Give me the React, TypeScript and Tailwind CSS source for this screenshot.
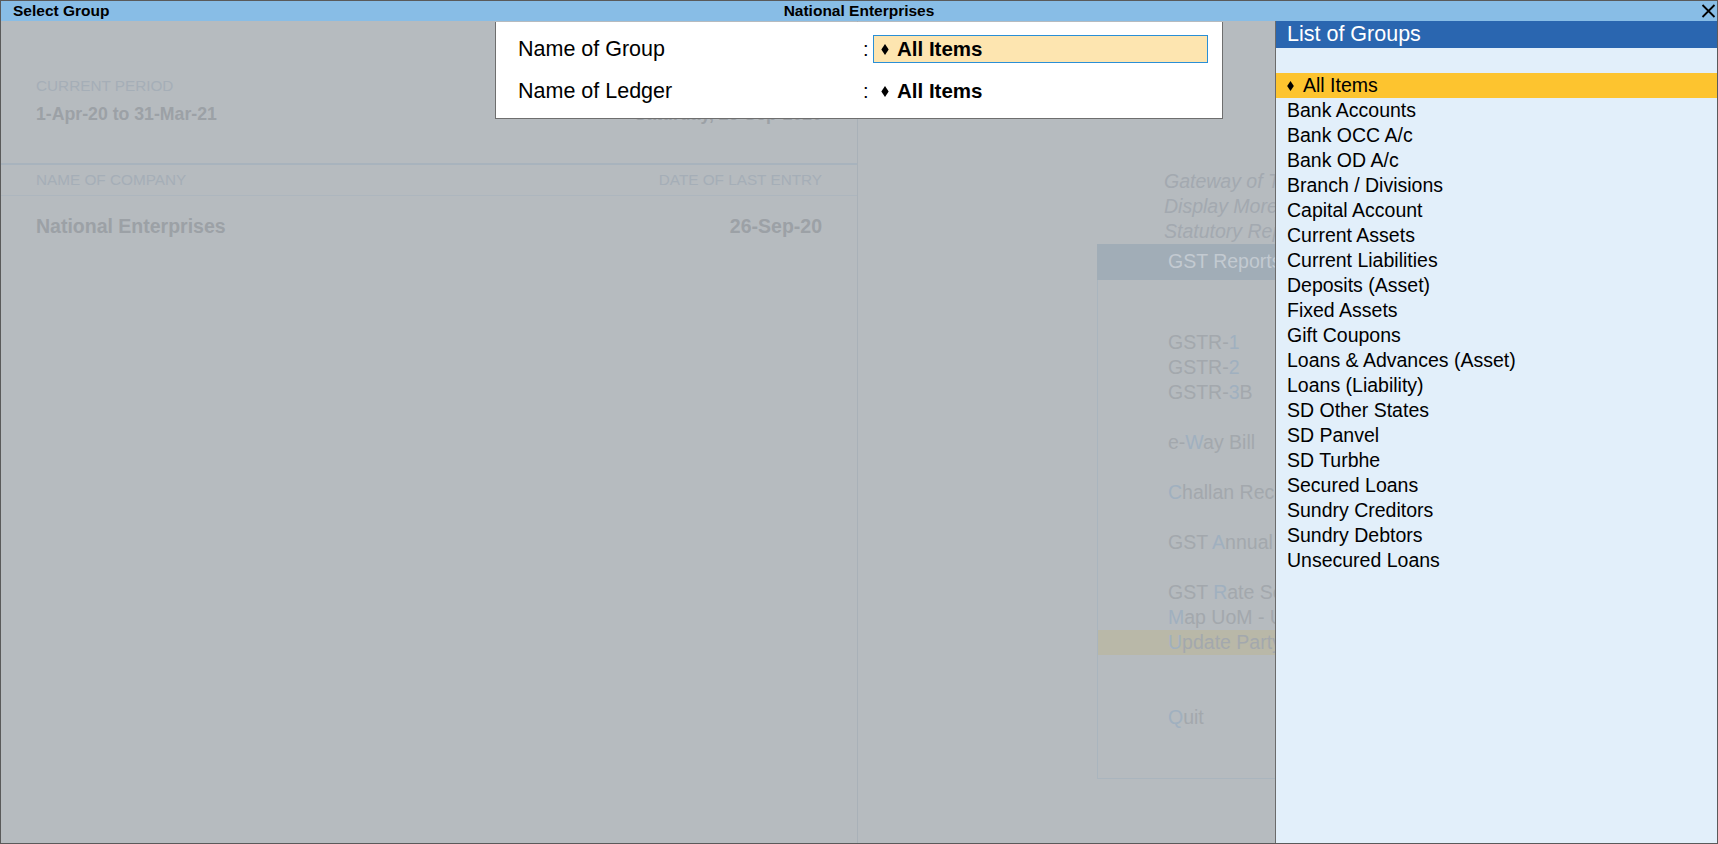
import React from "react";

type MenuItem = { pre: string; key: string; post: string; active?: boolean } | null;

const groups = [
  "Bank Accounts",
  "Bank OCC A/c",
  "Bank OD A/c",
  "Branch / Divisions",
  "Capital Account",
  "Current Assets",
  "Current Liabilities",
  "Deposits (Asset)",
  "Fixed Assets",
  "Gift Coupons",
  "Loans & Advances (Asset)",
  "Loans (Liability)",
  "SD Other States",
  "SD Panvel",
  "SD Turbhe",
  "Secured Loans",
  "Sundry Creditors",
  "Sundry Debtors",
  "Unsecured Loans",
];

const gstMenu: MenuItem[] = [
  { pre: "GSTR-", key: "1", post: "" },
  { pre: "GSTR-", key: "2", post: "" },
  { pre: "GSTR-", key: "3", post: "B" },
  null,
  { pre: "e-", key: "W", post: "ay Bill" },
  null,
  { pre: "", key: "C", post: "hallan Reconciliation" },
  null,
  { pre: "GST ", key: "A", post: "nnual Computation" },
  null,
  { pre: "GST ", key: "R", post: "ate Setup" },
  { pre: "", key: "M", post: "ap UoM - UQC" },
  { pre: "", key: "U", post: "pdate Party GSTIN/UIN", active: true },
  null,
  null,
  { pre: "", key: "Q", post: "uit" },
];

function Diamond({ w, h }: { w: number; h: number }) {
  return (
    <svg width={w} height={h} viewBox="0 0 8 12" className="shrink-0">
      <polygon points="4,0 8,6 4,12 0,6" fill="#000" />
    </svg>
  );
}

export default function App() {
  return (
    <div className="relative w-[1718px] h-[844px] overflow-hidden border border-[#5a5a5a] bg-[#b6bbbf] flex flex-col font-['Liberation_Sans',Arial,sans-serif]">
      {/* Title bar */}
      <div className="h-[20px] shrink-0 bg-[#88bde6] grid grid-cols-[1fr_auto_1fr] items-center text-black font-bold text-[15.5px] leading-[20px]">
        <div className="pl-[12px]">Select Group</div>
        <div>National Enterprises</div>
        <div className="flex justify-end pr-[1px]">
          <svg width="15" height="14" viewBox="0 0 15 14">
            <path d="M1.5 1 L13.5 13 M13.5 1 L1.5 13" stroke="#000" strokeWidth="1.8" />
          </svg>
        </div>
      </div>

      <div className="flex-1 flex min-h-0">
        {/* Company info pane (dimmed) */}
        <div className="w-[857px] shrink-0 border-r border-[#a9b1b8] flex flex-col">
          <div className="flex justify-between px-[35px] pt-[56px]">
            <div>
              <div className="h-[18px] text-[15.3px] leading-[18px] text-[#a5aeb7]">CURRENT PERIOD</div>
              <div className="h-[22px] mt-[8px] text-[17.7px] leading-[22px] font-bold text-[#9ca1a6]">
                1-Apr-20 to 31-Mar-21
              </div>
            </div>
            <div className="text-right">
              <div className="h-[18px] text-[15.3px] leading-[18px] text-[#a5aeb7]">CURRENT DATE</div>
              <div className="h-[22px] mt-[8px] text-[17.7px] leading-[22px] font-bold text-[#9ca1a6]">
                Saturday, 26-Sep-2020
              </div>
            </div>
          </div>
          <div className="mt-[38px] h-[2px] bg-[#a8b3bd]" />
          <div className="h-[30px] flex items-center justify-between px-[35px] text-[15.3px] text-[#a5aeb7]">
            <span>NAME OF COMPANY</span>
            <span>DATE OF LAST ENTRY</span>
          </div>
          <div className="h-px bg-[#adb6be]" />
          <div className="mt-[19px] h-[24px] flex items-center justify-between px-[35px] text-[19.5px] font-bold text-[#9ca1a6]">
            <span>National Enterprises</span>
            <span>26-Sep-20</span>
          </div>
        </div>

        {/* Gateway menu pane (dimmed, cut by the list panel) */}
        <div className="w-[417px] shrink-0 overflow-hidden flex flex-col pl-[239px] pt-[148px]">
          <div className="w-[400px] pl-[67px] italic text-[19.5px] leading-[25px] text-[#a3a9b0] whitespace-nowrap">
            <div className="h-[25px]">Gateway of Tally</div>
            <div className="h-[25px]">Display More Reports</div>
            <div className="h-[25px]">Statutory Reports</div>
          </div>
          <div className="w-[400px] h-[36px] bg-[#a1adb7] flex items-center pl-[71px] text-[19.5px] text-[#c3cad1] whitespace-nowrap">
            GST Reports
          </div>
          <div className="w-[400px] h-[499px] border-l border-b border-[#aab5be] pt-[50px] text-[19.5px] leading-[25px] text-[#a3a8ad] whitespace-nowrap">
            {gstMenu.map((m, i) =>
              m ? (
                <div key={i} className={`h-[25px] pl-[70px] ${m.active ? "bg-[#b9b8a8]" : ""}`}>
                  {m.pre}
                  <span className="text-[#a0b0bf]">{m.key}</span>
                  {m.post}
                </div>
              ) : (
                <div key={i} className="h-[25px]" />
              )
            )}
          </div>
        </div>

        {/* List of Groups panel */}
        <div className="flex-1 bg-[#e2effa] border-l border-[#6b6b6b] flex flex-col">
          <div className="h-[27px] bg-[#2a66b0] text-white text-[21.5px] leading-[27px] pl-[11px]">List of Groups</div>
          <div className="h-[25px]" />
          <div className="h-[25px] bg-[#fdc42f] flex items-center pl-[11px] gap-[9px] text-[19.5px] text-black">
            <Diamond w={7} h={10} />
            <span>All Items</span>
          </div>
          {groups.map((g) => (
            <div key={g} className="h-[25px] flex items-center pl-[11px] text-[19.5px] text-black">
              {g}
            </div>
          ))}
        </div>
      </div>

      {/* Select Group form (over the dimmed screen) */}
      <div className="absolute left-[494px] top-[21px] w-[728px] h-[97px] bg-white border-x border-b border-[#6e6e6e] pl-[22px] pt-[13px]">
        <div className="flex items-center h-[28px]">
          <div className="w-[345px] text-[21.5px] text-black">Name of Group</div>
          <div className="w-[10px] text-[20px] text-black">:</div>
          <div className="w-[335px] h-[28px] bg-[#fde5b0] border border-[#2a8fd6] flex items-center pl-[7px] gap-[8px] font-bold text-[20.5px] text-black">
            <Diamond w={8} h={11} />
            <span>All Items</span>
          </div>
        </div>
        <div className="flex items-center h-[28px] mt-[14px]">
          <div className="w-[345px] text-[21.5px] text-black">Name of Ledger</div>
          <div className="w-[10px] text-[20px] text-black">:</div>
          <div className="w-[335px] h-[28px] flex items-center pl-[8px] gap-[8px] font-bold text-[20.5px] text-black">
            <Diamond w={8} h={11} />
            <span>All Items</span>
          </div>
        </div>
      </div>
    </div>
  );
}
